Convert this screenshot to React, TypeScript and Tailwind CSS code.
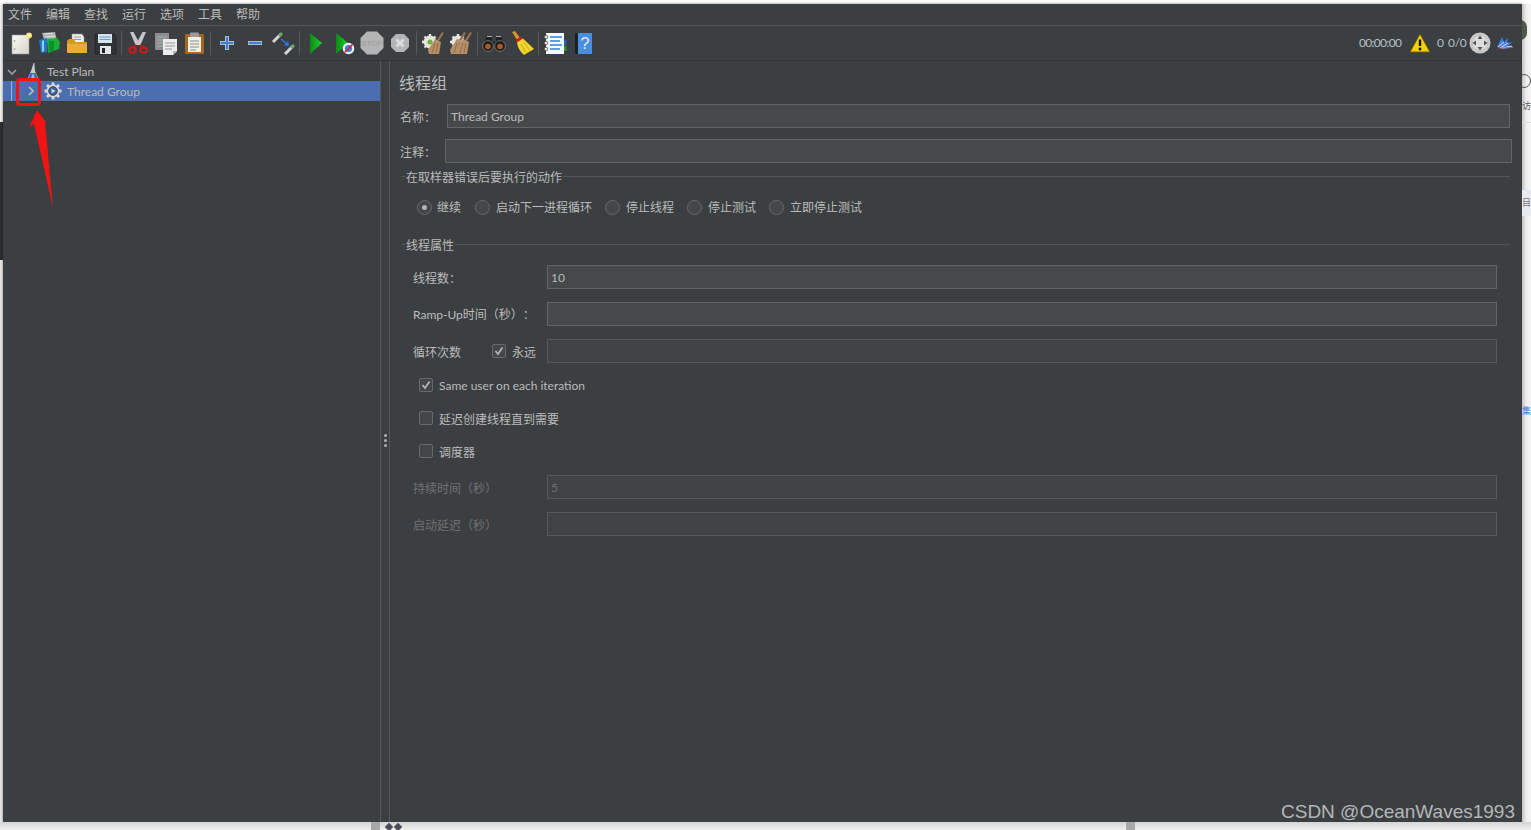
import React from "react";

const S = ({ children }: { children: React.ReactNode }) => (
  <div className="w-[28px] h-[24px] flex items-center justify-center shrink-0">
    <svg width="24" height="24" viewBox="0 0 24 24">{children}</svg>
  </div>
);
const Sep = () => (
  <div className="w-[5px] h-[24px] flex justify-center shrink-0">
    <div className="w-px h-full bg-[#565a5c]" />
  </div>
);

const NewDoc = () => (
  <S>
    <defs><linearGradient id="nd" x1="0" y1="0" x2="1" y2="1"><stop offset="0" stopColor="#fafaf2" /><stop offset="1" stopColor="#d4d4cc" /></linearGradient></defs>
    <rect x="3" y="4" width="17" height="19" fill="url(#nd)" stroke="#9a9a90" strokeWidth="0.6" />
    <circle cx="5.5" cy="10" r="0.8" fill="#888" /><circle cx="5.5" cy="18" r="0.8" fill="#888" />
    <circle cx="20" cy="4.5" r="3" fill="#f6e26a" /><circle cx="20" cy="4.5" r="1.4" fill="#fff8c0" />
  </S>
);
const Templates = () => (
  <S>
    <path d="M5 2 L18 1 L20 10 L8 12 Z" fill="#a9b0ad" />
    <path d="M7 3 L16 2.5 M8 6 L18 5 M8 9 L18 8" stroke="#e6e6e6" strokeWidth="1.2" />
    <path d="M2 9 L10 7 L10 21 L4 22 Z" fill="#1f78c8" />
    <path d="M5 10 L7 9 L7 20 L5 21 Z" fill="#8fd0f0" />
    <path d="M10 8 L20 7 L23 11 L22 18 L11 22 Z" fill="#16b038" />
    <rect x="12" y="10" width="5" height="10" fill="#0e8f2a" />
  </S>
);
const OpenF = () => (
  <S>
    <path d="M7 3 H17 L19 6 V13 H7 Z" fill="#eeeeee" stroke="#999" strokeWidth="0.5" />
    <path d="M9 6 H16 M9 8.5 H16" stroke="#999" strokeWidth="1" />
    <path d="M2 10 L4 8 L9 8 L10.5 11 L22 11 V22 H3 Q2 22 2 20 Z" fill="#d9981f" />
    <path d="M2 13 H22 V21 Q22 22 21 22 H3 Q2 22 2 20 Z" fill="#eaac38" />
  </S>
);
const Save = () => (
  <S>
    <path d="M2 3 H21 L23 5 V23 H2 Z" fill="#2f3236" stroke="#17191b" strokeWidth="0.5" />
    <rect x="5" y="3" width="14" height="9" fill="#d6e4f2" />
    <path d="M6.5 6 H17.5 M6.5 8.5 H17.5" stroke="#6d9bd0" strokeWidth="1" />
    <rect x="7" y="15" width="11" height="8" fill="#e4e4e4" />
    <rect x="9" y="17" width="3" height="5" fill="#222" />
  </S>
);
const Cut = () => (
  <S>
    <path d="M4 1 L7.5 1 L12 9.5 L16.5 1 L20 1 L14.5 14 L9.5 14 Z" fill="#c3c7c9" />
    <path d="M10 14 L8 16 M14 14 L16 16" stroke="#c81818" strokeWidth="2" />
    <ellipse cx="6.5" cy="19" rx="3.2" ry="2.8" fill="none" stroke="#d01a1a" strokeWidth="2" />
    <ellipse cx="17.5" cy="19" rx="3.2" ry="2.8" fill="none" stroke="#d01a1a" strokeWidth="2" />
  </S>
);
const Copy = () => (
  <S>
    <rect x="1" y="2" width="14" height="17" fill="#8c8f90" />
    <path d="M3 6 H13 M3 9 H13 M3 12 H13 M3 15 H13" stroke="#a8abac" strokeWidth="1" />
    <path d="M9 8 H23 V20 L19 24 H9 Z" fill="#ececec" />
    <path d="M23 20 L19 20 V24 Z" fill="#b8b8b8" />
    <path d="M11 12 H21 M11 15 H21 M11 18 H18" stroke="#9a9a9a" strokeWidth="1" />
  </S>
);
const Paste = () => (
  <S>
    <rect x="3" y="3" width="19" height="20" rx="1" fill="#a8641a" />
    <rect x="6" y="6" width="13" height="15" fill="#f0efe9" />
    <rect x="8" y="1.5" width="9" height="4.5" rx="1" fill="#9a9c9e" />
    <path d="M8 10 H17 M8 13 H17 M8 16 H17 M8 19 H14" stroke="#8a8a8a" strokeWidth="1" />
  </S>
);
const Plus = () => (
  <S>
    <path d="M12 5 V19 M5 12 H19" stroke="#d8e6f6" strokeWidth="3.6" />
    <path d="M12 5.5 V18.5 M5.5 12 H18.5" stroke="#3f80d0" strokeWidth="2.2" />
  </S>
);
const Minus = () => (
  <S>
    <path d="M5 12 H19" stroke="#d8e6f6" strokeWidth="3.6" />
    <path d="M5.5 12 H18.5" stroke="#3f80d0" strokeWidth="2.2" />
  </S>
);
const Toggle = () => (
  <S>
    <path d="M2 11 L10 3" stroke="#d4d8d4" strokeWidth="3" />
    <path d="M8 5 L11 2" stroke="#62a860" strokeWidth="3" />
    <path d="M14 23 L22 15" stroke="#d4d8d4" strokeWidth="3" />
    <path d="M20 17 L23 14" stroke="#62a860" strokeWidth="3" />
    <path d="M10 8 L17 14" stroke="#2a78e0" strokeWidth="1.6" />
    <path d="M18 15 L13 14.5 L17 10 Z" fill="#2a78e0" />
  </S>
);
const Play = () => (
  <S>
    <defs><linearGradient id="pl" x1="0" y1="0" x2="1" y2="0"><stop offset="0" stopColor="#0a8a12" /><stop offset="1" stopColor="#22d030" /></linearGradient></defs>
    <path d="M6 2 L18 12 L6 23 Z" fill="url(#pl)" />
  </S>
);
const PlayNo = () => (
  <S>
    <path d="M4 2 L16 12 L4 23 Z" fill="url(#pl)" />
    <circle cx="16.5" cy="17.5" r="5.8" fill="#e8f0fa" />
    <circle cx="16.5" cy="17.5" r="3.6" fill="#3f7fd8" />
    <path d="M12.5 21.5 L20.5 13.5" stroke="#e02020" strokeWidth="1.6" />
  </S>
);
const Stop = () => (
  <svg width="24" height="24" viewBox="0 0 24 24">
    <path d="M7 0.5 H17 L23.5 7 V17 L17 23.5 H7 L0.5 17 V7 Z" fill="#b4b4b4" />
    <text x="12" y="15" textAnchor="middle" fontSize="8" fontWeight="700" fontFamily="Liberation Sans, sans-serif" fill="#a2a2a2">STOP</text>
  </svg>
);
const Shut = () => (
  <S>
    <path d="M8 3 H16 L21 8 V16 L16 21 H8 L3 16 V8 Z" fill="#b4b4b4" />
    <path d="M8.5 8.5 L15.5 15.5 M15.5 8.5 L8.5 15.5" stroke="#dcdcdc" strokeWidth="3" />
  </S>
);
const GearSmall = () => (
  <>
    <circle cx="9" cy="11" r="6.5" fill="#e6e6e0" />
    <path d="M9 3 V19 M1 11 H17 M3.5 5.5 L14.5 16.5 M14.5 5.5 L3.5 16.5" stroke="#e6e6e0" strokeWidth="2.4" />
    <circle cx="9" cy="11" r="2.6" fill="#78b040" />
  </>
);
const Straw = ({ dx = 0 }: { dx?: number }) => (
  <g transform={`translate(${dx} 0)`}>
    <path d="M21 1 L23 2 L18 10 L16 9 Z" fill="#94704c" />
    <path d="M14 8 L20 11 L18 23 L8 23 L7 19 Z" fill="#b48f68" />
    <path d="M14 12 L11 22 M17 12 L15 22" stroke="#8c6a46" strokeWidth="0.9" />
  </g>
);
const Clear = () => (<S><GearSmall /><Straw /></S>);
const ClearAll = () => (<S><GearSmall /><Straw dx={-6} /><Straw /></S>);
const Bino = () => (
  <S>
    <path d="M5 5 H10 V11 H14 V5 H19 L23 15 H1 Z" fill="#232323" />
    <circle cx="6" cy="15" r="5.4" fill="#1e1e1e" stroke="#8a8a8a" strokeWidth="0.7" />
    <circle cx="18" cy="15" r="5.4" fill="#1e1e1e" stroke="#8a8a8a" strokeWidth="0.7" />
    <circle cx="6" cy="15.5" r="2.8" fill="#a85a28" />
    <circle cx="18" cy="15.5" r="2.8" fill="#a85a28" />
    <path d="M5 5.5 H10 M14 5.5 H19" stroke="#b0b0b0" strokeWidth="1" />
  </S>
);
const Broom = () => (
  <S>
    <path d="M2 1 L5 0 L10 7 L7 9 Z" fill="#d8952a" />
    <path d="M5.5 9 L11 5.5 L13 8 L7.5 12 Z" fill="#c81c1c" />
    <path d="M7 11.5 L13 7.5 L24 18 L14 24 Q8 19 7 11.5 Z" fill="#f1d52a" />
    <path d="M11 13 L16 22 M14 11 L20 20" stroke="#c7a514" strokeWidth="0.8" />
  </S>
);
const ListDoc = () => (
  <S>
    <rect x="3" y="2" width="18" height="21" fill="#f6f8fb" />
    <rect x="21" y="9" width="2.5" height="5" fill="#2360c8" />
    <rect x="21" y="15" width="2.5" height="5" fill="#1f9a2f" />
    <path d="M7 6 H19 M7 10 H17 M7 14 H19 M7 18 H17" stroke="#2a82e8" strokeWidth="1.3" />
    <g fill="#e8e8e8" stroke="#222" strokeWidth="0.6"><circle cx="3" cy="6" r="1.8" /><circle cx="3" cy="12" r="1.8" /><circle cx="3" cy="18" r="1.8" /></g>
  </S>
);
const Help = () => (
  <S>
    <rect x="4" y="2" width="5" height="21" rx="1" fill="#182028" />
    <rect x="7" y="2" width="14" height="21" fill="#4a8ee0" />
    <text x="14" y="18" textAnchor="middle" fontSize="16" fontFamily="Liberation Sans, sans-serif" fill="#e6f0fc">?</text>
  </S>
);
const Tower = () => (
  <svg width="14" height="18" viewBox="0 0 14 18" className="shrink-0">
    <path d="M7.6 0 L8.4 0 L9 8 L13 17 L1 17 L5 8 Z" fill="#c6cbd0" />
    <path d="M1.5 17 L4.5 10 H9.5 L12.5 17 Z" fill="#2c6fc8" />
    <path d="M4.5 17 L6.5 11 H7.5 L9.5 17 Z" fill="#8fbdf0" />
  </svg>
);
const Gear = () => (
  <svg width="18" height="18" viewBox="0 0 18 18" className="shrink-0">
    <circle cx="9" cy="9" r="6.4" fill="#d8dadc" />
    <path d="M9 0.5 V17.5 M0.5 9 H17.5 M3 3 L15 15 M15 3 L3 15" stroke="#d8dadc" strokeWidth="2.8" />
    <circle cx="9" cy="9" r="4.4" fill="#3f5f94" stroke="#33404f" strokeWidth="0.8" />
    <path d="M7.5 6.5 L11.5 9 L7.5 11.5 Z" fill="#c8d8f0" />
  </svg>
);

const Radio = ({ label, on, first }: { label: string; on?: boolean; first?: boolean }) => (
  <div className={`flex items-center ${first ? "gap-[5px] mr-px" : "gap-[6px]"}`}>
    <div className="w-[15px] h-[15px] rounded-full border border-[#666a6c] bg-[#43474a] flex items-center justify-center">
      {on && <div className="w-[5px] h-[5px] rounded-full bg-[#b4b4b4]" />}
    </div>
    <span>{label}</span>
  </div>
);

const Check = ({ on }: { on?: boolean }) => (
  <div className="w-[14px] h-[14px] rounded-[2px] border border-[#666a6c] bg-[#43474a] flex items-center justify-center shrink-0">
    {on && (
      <svg width="10" height="10" viewBox="0 0 10 10">
        <path d="M1.5 5 L4 8 L8.5 1.5" fill="none" stroke="#b4b4b4" strokeWidth="1.8" />
      </svg>
    )}
  </div>
);

const Legend = ({ text }: { text: string }) => (
  <div className="flex items-center h-[14px] ml-[12px] w-[1108px]">
    <div className="w-[3px] h-px bg-[#53575a]" />
    <span className="px-px leading-[14px] translate-y-[2px]">{text}</span>
    <div className="flex-1 h-px bg-[#53575a]" />
  </div>
);

const FieldRow = ({ label, value, disabled, latin }: { label: string; value?: string; disabled?: boolean; latin?: boolean }) => (
  <div className={`flex items-center h-[24px] ml-[23px] ${disabled ? "text-[#6f7173]" : ""}`}>
    <span className={`w-[134px] shrink-0 whitespace-nowrap ${latin ? "translate-y-px" : "translate-y-[2px]"}`}>{label}</span>
    <div className={`w-[950px] h-[24px] border px-[3px] flex items-center ${disabled ? "border-[#56595b] bg-[#3f4345]" : "border-[#646464] bg-[#45494a]"}`}>
      <span className="translate-y-px">{value}</span>
    </div>
  </div>
);

const CheckRow = ({ label, on, latin }: { label: string; on?: boolean; latin?: boolean }) => (
  <div className="flex items-center gap-[6px] h-[14px] ml-[29px]">
    <Check on={on} />
    <span className={latin ? "translate-y-px" : "translate-y-[2px]"}>{label}</span>
  </div>
);

export default function App() {
  const menus = ["文件", "编辑", "查找", "运行", "选项", "工具", "帮助"];
  return (
    <div className="relative w-full h-[830px] overflow-hidden bg-[#f2f2f2] font-['Lato','Noto_Sans_CJK_SC',sans-serif] text-[12px] text-[#bbbbbb] [text-spacing-trim:space-all] flex flex-col">
      <div className="h-[4px] bg-white shrink-0" />
      <div className="flex h-[818px] shrink-0">
        <div className="w-[3px] shrink-0 flex flex-col">
          <div className="h-[118px] bg-[#f4f4f4]" />
          <div className="h-[138px] bg-[#2e3032]" />
          <div className="flex-1 bg-[#ededed]" />
        </div>
        <div className="w-[1519px] shrink-0 bg-[#3c3f41] flex flex-col shadow-[0_0_3px_rgba(0,0,0,0.5)]">
          <div className="h-[21px] flex items-center gap-[14px] pl-[5px] border-b border-[#55585a] box-content shrink-0">
            {menus.map((m) => (
              <span key={m} className="leading-[21px]">{m}</span>
            ))}
          </div>
          <div className="h-[35px] flex items-center pl-[4px] pr-[8px] border-b border-[#323436] shrink-0">
            <NewDoc /><Templates /><OpenF /><Save /><Sep />
            <Cut /><Copy /><Paste /><Sep />
            <Plus /><Minus /><Toggle /><Sep />
            <Play /><PlayNo />
            <div className="w-[28px] flex justify-center"><Stop /></div>
            <Shut /><Sep />
            <Clear /><ClearAll /><Sep />
            <Bino /><Broom /><Sep />
            <ListDoc /><Help />
            <div className="flex-1" />
            <span className="text-[#b4c0c8] w-[43px] whitespace-nowrap tracking-[-0.7px]">00:00:00</span>
            <svg width="22" height="20" viewBox="0 0 22 20" className="ml-[7px]">
              <path d="M11 1 L21 19 H1 Z" fill="#f5d000" stroke="#6e5c00" strokeWidth="1" />
              <path d="M11 6.5 V13" stroke="#111" strokeWidth="2.4" />
              <circle cx="11" cy="16" r="1.4" fill="#111" />
            </svg>
            <span className="ml-[6px] w-[11px] text-[#b4c0c8]">0</span>
            <span className="w-[16px] text-[#b4c0c8] tracking-[-0.3px]">0/0</span>
            <svg width="22" height="22" viewBox="0 0 22 22" className="ml-[5px]">
              <circle cx="11" cy="11" r="10.5" fill="#c9c9c9" />
              <circle cx="11" cy="11" r="7" fill="#dedede" />
              <path d="M11 3.5 L13.5 7 H8.5 Z M11 18.5 L13.5 15 H8.5 Z M3.5 11 L7 8.5 V13.5 Z M18.5 11 L15 8.5 V13.5 Z" fill="#555" />
            </svg>
            <svg width="18" height="14" viewBox="0 0 18 14" className="ml-[5px]">
              <path d="M1 11 L6 1 L8 6 L12 2 L11 7 L16 6 L12 10 L18 11 L8 13 Z" fill="#3f7fe0" />
              <path d="M2 11 L8 6 M4 12 L12 7 M6 12 L16 10" stroke="#e8e8f4" strokeWidth="0.9" />
              <path d="M3 12 L17 11.5" stroke="#e05060" strokeWidth="0.8" />
            </svg>
          </div>
          <div className="flex-1 flex min-h-0">
            <div className="w-[378px] shrink-0 border-r border-[#55585a] pt-[1px]">
              <div className="h-[19px] flex items-center">
                <svg width="10" height="10" viewBox="0 0 10 10" className="ml-[4px]">
                  <path d="M1 3 L5 7 L9 3" fill="none" stroke="#9a9da0" strokeWidth="1.7" />
                </svg>
                <div className="ml-[9px] flex"><Tower /></div>
                <span className="ml-[7px]">Test Plan</span>
              </div>
              <div className="h-[20px] flex items-center bg-[#4b6eaf] relative">
                <div className="absolute left-[8px] top-0 w-px h-full bg-[#8fb4ea]" />
                <svg width="10" height="10" viewBox="0 0 10 10" className="ml-[23px]">
                  <path d="M3 1 L7 5 L3 9" fill="none" stroke="#b8bcc4" strokeWidth="1.7" />
                </svg>
                <div className="ml-[8px] flex"><Gear /></div>
                <span className="ml-[5px] translate-y-px">Thread Group</span>
              </div>
            </div>
            <div className="w-[8px] shrink-0 flex flex-col items-center justify-center gap-[2px] pb-[3px]">
              <div className="w-[3px] h-[3px] rounded-full bg-[#b0b0b0]" />
              <div className="w-[3px] h-[3px] rounded-full bg-[#b0b0b0]" />
              <div className="w-[3px] h-[3px] rounded-full bg-[#b0b0b0]" />
            </div>
            <div className="flex-1 border-l border-[#55585a] flex flex-col">
              <div className="mt-[11px] h-[22px] pl-[9px] text-[16px] leading-[22px]">线程组</div>
              <div className="mt-[10px] h-[24px] flex items-center pl-[10px]">
                <span className="w-[47px] shrink-0 translate-y-[2px]">名称：</span>
                <div className="w-[1063px] h-[24px] border border-[#646464] bg-[#45494a] px-[3px] flex items-center"><span className="translate-y-px">Thread Group</span></div>
              </div>
              <div className="mt-[11px] h-[24px] flex items-center pl-[10px]">
                <span className="w-[45px] shrink-0 translate-y-[2px]">注释：</span>
                <div className="w-[1067px] h-[24px] border border-[#646464] bg-[#45494a]" />
              </div>
              <div className="mt-[6px]"><Legend text="在取样器错误后要执行的动作" /></div>
              <div className="mt-[16px] h-[17px] flex items-center gap-[13px] ml-[27px]">
                <Radio label="继续" on first />
                <Radio label="启动下一进程循环" />
                <Radio label="停止线程" />
                <Radio label="停止测试" />
                <Radio label="立即停止测试" />
              </div>
              <div className="mt-[21px]"><Legend text="线程属性" /></div>
              <div className="mt-[14px] flex flex-col gap-[13px]">
                <FieldRow label="线程数：" value="10" />
                <FieldRow label="Ramp-Up时间（秒）：" latin />
                <div className="flex items-center h-[24px] ml-[23px]">
                  <span className="w-[79px] shrink-0 translate-y-[2px]">循环次数</span>
                  <Check on />
                  <span className="ml-[6px] w-[35px] shrink-0 translate-y-[2px]">永远</span>
                  <div className="w-[950px] h-[24px] border border-[#56595b] bg-[#3f4345]" />
                </div>
              </div>
              <div className="mt-[15px] flex flex-col gap-[19px]">
                <CheckRow label="Same user on each iteration" on latin />
                <CheckRow label="延迟创建线程直到需要" />
                <CheckRow label="调度器" />
              </div>
              <div className="mt-[17px] flex flex-col gap-[13px]">
                <FieldRow label="持续时间（秒）" value="5" disabled />
                <FieldRow label="启动延迟（秒）" disabled />
              </div>
            </div>
          </div>
        </div>
        <div className="flex-1 bg-gradient-to-r from-[#c4c4c4] via-[#f0f0f0] to-[#f4f4f4] relative overflow-hidden text-[#555] text-[9px]">
          <div className="absolute left-[-9px] top-[16px] w-[14px] h-[20px] rounded-full bg-[#4c5a44]" />
          <div className="absolute left-[-5px] top-[70px] w-[14px] h-[14px] rounded-full border border-[#555]" />
          <div className="absolute left-0 top-[95px] leading-[14px]">访</div>
          <div className="absolute left-0 top-[118px] w-full h-px bg-[#dddddd]" />
          <div className="absolute left-0 top-[186px] w-full h-[26px] bg-[#e8eaf2] leading-[26px] text-[#777]">目</div>
          <div className="absolute left-0 top-[400px] leading-[14px] text-[#2a7fd0]">集</div>
        </div>
      </div>
      <div className="flex-1 bg-gradient-to-b from-[#d4d4d4] to-[#f0f0f0] relative">
        <div className="absolute left-[371px] top-0 w-[9px] h-full bg-[#a8a8a8]" />
        <div className="absolute left-[1126px] top-0 w-[9px] h-full bg-[#a8a8a8]" />
        <div className="absolute left-[386px] top-[2px] w-[6px] h-[6px] rotate-45 bg-[#4c4c5c]" />
        <div className="absolute left-[395px] top-[2px] w-[6px] h-[6px] rotate-45 bg-[#4c4c5c]" />
      </div>

      <div className="absolute left-[16px] top-[78px] w-[25px] h-[28px] border-[3px] border-[#f01414] rounded-[4px]" />
      <svg className="absolute left-0 top-0 pointer-events-none" width="70" height="215" viewBox="0 0 70 215">
        <path d="M37 110 L29 127 L34 124 L53 208 L45 122 L48 125 Z" fill="#f01414" />
      </svg>
      <div className="absolute right-[16px] top-[800px] text-[19px] leading-[24px] font-['Liberation_Sans',sans-serif] text-[#b4b6b8]">CSDN @OceanWaves1993</div>
    </div>
  );
}
